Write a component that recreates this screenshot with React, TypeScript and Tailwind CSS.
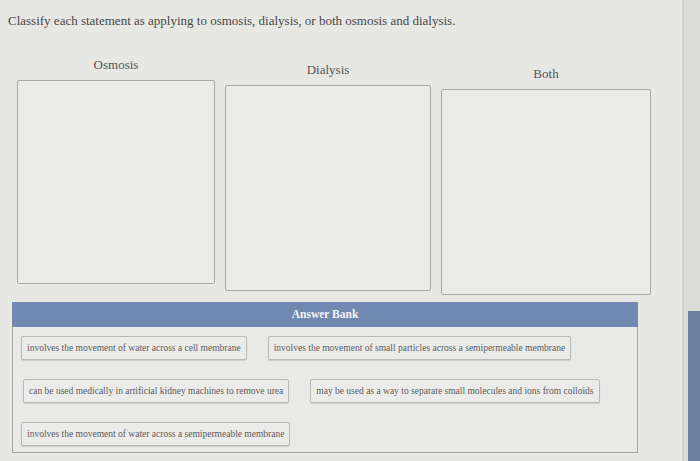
import React from "react";

const columns = [
  { title: "Osmosis", width: "w-[198px]", offset: "mt-0", height: "h-[204px]" },
  { title: "Dialysis", width: "w-[206px]", offset: "mt-[5px]", height: "h-[206px]" },
  { title: "Both", width: "w-[210px]", offset: "mt-[9px]", height: "h-[206px]" },
];

const rows = [
  [
    "involves the movement of water across a cell membrane",
    "involves the movement of small particles across a semipermeable membrane",
  ],
  [
    "can be used medically in artificial kidney machines to remove urea",
    "may be used as a way to separate small molecules and ions from colloids",
  ],
  ["involves the movement of water across a semipermeable membrane"],
];

const Chip = ({ label }: { label: string }) => (
  <div className="h-[24px] px-[5px] flex items-center whitespace-nowrap rounded-[2px] border border-[#b9b9b7] bg-[#ebebe9] text-[9.5px] text-[#5c5c5c] shadow-[0_1px_1px_rgba(0,0,0,0.12)]">
    {label}
  </div>
);

export default function App() {
  return (
    <div
      className="w-[700px] h-[461px] flex overflow-hidden bg-[#e4e4e1]"
      style={{ fontFamily: '"Liberation Serif", "Times New Roman", serif' }}
    >
      <div className="w-[684px] h-full flex flex-col border-r-2 border-[#d2d2cf] bg-[#e7e7e4]">
        <p className="pt-[12px] pl-[8px] text-[13px] text-[#474747] leading-[18px]">
          Classify each statement as applying to osmosis, dialysis, or both osmosis and dialysis.
        </p>

        <div className="flex items-start gap-[10px] pl-[17px] mt-[27px]">
          {columns.map((col) => (
            <div key={col.title} className={`flex flex-col items-center ${col.offset}`}>
              <span className="text-[13px] text-[#545454] leading-[16px]">{col.title}</span>
              <div
                className={`${col.width} ${col.height} mt-[7px] rounded-[2px] border-[1.5px] border-[#a8a8a6] bg-[#ebebe9]`}
              />
            </div>
          ))}
        </div>

        <div className="ml-[12px] mt-[7px] w-[626px] flex flex-col">
          <div className="h-[25px] bg-[#7189b1] flex items-center justify-center text-[11.5px] font-bold text-[#f2f4f8]">
            Answer Bank
          </div>
          <div className="h-[126px] border border-t-0 border-[#a3a3a1] bg-[#e9e9e7] pt-[9px] pl-[8px] flex flex-col gap-[19px]">
            {rows.map((row, i) => (
              <div key={i} className={`flex items-center gap-[21px] ${i === 1 ? "pl-[2px]" : ""}`}>
                {row.map((label) => (
                  <Chip key={label} label={label} />
                ))}
              </div>
            ))}
          </div>
        </div>
      </div>

      <div className="flex-1 flex flex-col bg-[#dcdcd9]">
        <div className="flex-1" />
        <div className="h-[150px] bg-[#6b7f9f] ml-[4px]" />
      </div>
    </div>
  );
}
